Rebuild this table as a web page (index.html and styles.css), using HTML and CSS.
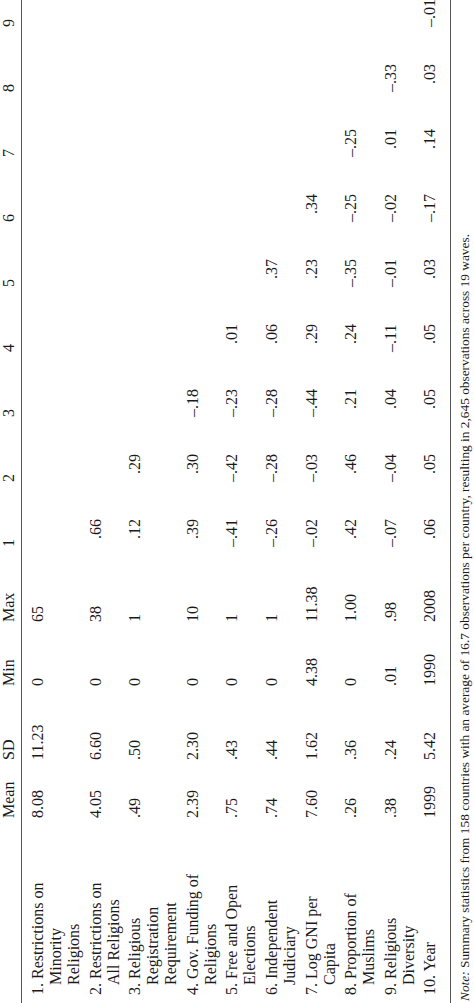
FILE: index.html
```html
<!DOCTYPE html>
<html lang="en">
<head>
<meta charset="utf-8">
<title>Summary statistics</title>
<link rel="stylesheet" href="styles.css">
</head>
<body>
<div class="sheet">
  <table class="stats">
    <colgroup>
      <col class="c-lab"><col class="c-mean"><col class="c-sd"><col class="c-min"><col class="c-max">
      <col class="c-r"><col class="c-r"><col class="c-r"><col class="c-r"><col class="c-r"><col class="c-r"><col class="c-r"><col class="c-r"><col class="c-r">
    </colgroup>
    <thead>
      <tr><th></th><th>Mean</th><th>SD</th><th>Min</th><th>Max</th><th>1</th><th>2</th><th>3</th><th>4</th><th>5</th><th>6</th><th>7</th><th>8</th><th>9</th></tr>
    </thead>
    <tbody>
      <tr class="first"><td class="lc"><div class="lab">1. Restrictions on Minority Religions</div></td><td>8.08</td><td>11.23</td><td>0</td><td>65</td><td></td><td></td><td></td><td></td><td></td><td></td><td></td><td></td><td></td></tr>
      <tr><td class="lc"><div class="lab">2. Restrictions on All Religions</div></td><td>4.05</td><td>6.60</td><td>0</td><td>38</td><td><span class="p">.66</span></td><td></td><td></td><td></td><td></td><td></td><td></td><td></td><td></td></tr>
      <tr><td class="lc"><div class="lab">3. Religious Registration Requirement</div></td><td>.49</td><td>.50</td><td>0</td><td>1</td><td><span class="p">.12</span></td><td><span class="p">.29</span></td><td></td><td></td><td></td><td></td><td></td><td></td><td></td></tr>
      <tr><td class="lc"><div class="lab">4. Gov. Funding of Religions</div></td><td>2.39</td><td>2.30</td><td>0</td><td>10</td><td><span class="p">.39</span></td><td><span class="p">.30</span></td><td>–.18</td><td></td><td></td><td></td><td></td><td></td><td></td></tr>
      <tr><td class="lc"><div class="lab">5. Free and Open Elections</div></td><td>.75</td><td>.43</td><td>0</td><td>1</td><td>–.41</td><td>–.42</td><td>–.23</td><td><span class="p">.01</span></td><td></td><td></td><td></td><td></td><td></td></tr>
      <tr><td class="lc"><div class="lab">6. Independent Judiciary</div></td><td>.74</td><td>.44</td><td>0</td><td>1</td><td>–.26</td><td>–.28</td><td>–.28</td><td><span class="p">.06</span></td><td><span class="p">.37</span></td><td></td><td></td><td></td><td></td></tr>
      <tr><td class="lc"><div class="lab">7. Log GNI per Capita</div></td><td>7.60</td><td>1.62</td><td>4.38</td><td>11.38</td><td>–.02</td><td>–.03</td><td>–.44</td><td><span class="p">.29</span></td><td><span class="p">.23</span></td><td><span class="p">.34</span></td><td></td><td></td><td></td></tr>
      <tr><td class="lc"><div class="lab">8. Proportion of Muslims</div></td><td>.26</td><td>.36</td><td>0</td><td>1.00</td><td><span class="p">.42</span></td><td><span class="p">.46</span></td><td><span class="p">.21</span></td><td><span class="p">.24</span></td><td>–.35</td><td>–.25</td><td>–.25</td><td></td><td></td></tr>
      <tr><td class="lc"><div class="lab">9. Religious Diversity</div></td><td>.38</td><td>.24</td><td>.01</td><td>.98</td><td>–.07</td><td>–.04</td><td><span class="p">.04</span></td><td>–.11</td><td>–.01</td><td>–.02</td><td><span class="p">.01</span></td><td>–.33</td><td></td></tr>
      <tr class="last"><td class="lc"><div class="lab">10. Year</div></td><td>1999</td><td>5.42</td><td>1990</td><td>2008</td><td><span class="p">.06</span></td><td><span class="p">.05</span></td><td><span class="p">.05</span></td><td><span class="p">.05</span></td><td><span class="p">.03</span></td><td>–.17</td><td><span class="p">.14</span></td><td><span class="p">.03</span></td><td>–.01</td></tr>
    </tbody>
  </table>
  <p class="note"><em>Note:</em> Summary statistics from 158 countries with an average of 16.7 observations per country, resulting in 2,645 observations across 19 waves.</p>
</div>
</body>
</html>
```

FILE: styles.css
```css
html, body {
  margin: 0;
  padding: 0;
  width: 474px;
  height: 1003px;
  overflow: hidden;
  background: #ffffff;
}

.sheet {
  width: 1040px;
  height: 474px;
  transform-origin: 0 0;
  transform: translateY(1003px) rotate(-90deg);
  font-family: "Liberation Serif", "Times New Roman", serif;
  font-size: 16px;
  line-height: 18px;
  color: #1a1a1a;
}

.stats {
  border-collapse: collapse;
  table-layout: fixed;
  width: 1040px;
}

.c-lab { width: 185px; }
.c-mean { width: 58px; }
.c-sd { width: 74px; }
.c-min { width: 64px; }
.c-max { width: 75px; }
.c-r { width: 65px; }

.stats th {
  font-weight: normal;
  text-align: left;
  padding: 0 0 3px 0;
  border-bottom: 1px solid #555555;
  vertical-align: bottom;
}

.stats td {
  text-align: left;
  vertical-align: top;
  padding: 2px 0 1.6px 0;
  white-space: nowrap;
}

.stats td.lc { padding-left: 8px; }

.stats tr.first td { padding-top: 7px; }

.stats tr.last td {
  padding-bottom: 11px;
  border-bottom: 1px solid #555555;
}

.lab {
  width: 117px;
  padding-left: 10px;
  text-indent: -10px;
  white-space: normal;
}

.p { padding-left: 0.5em; }

.note {
  margin: 5px 0 0 0;
  padding-left: 2px;
  font-size: 13.35px;
  line-height: 18px;
}
```
